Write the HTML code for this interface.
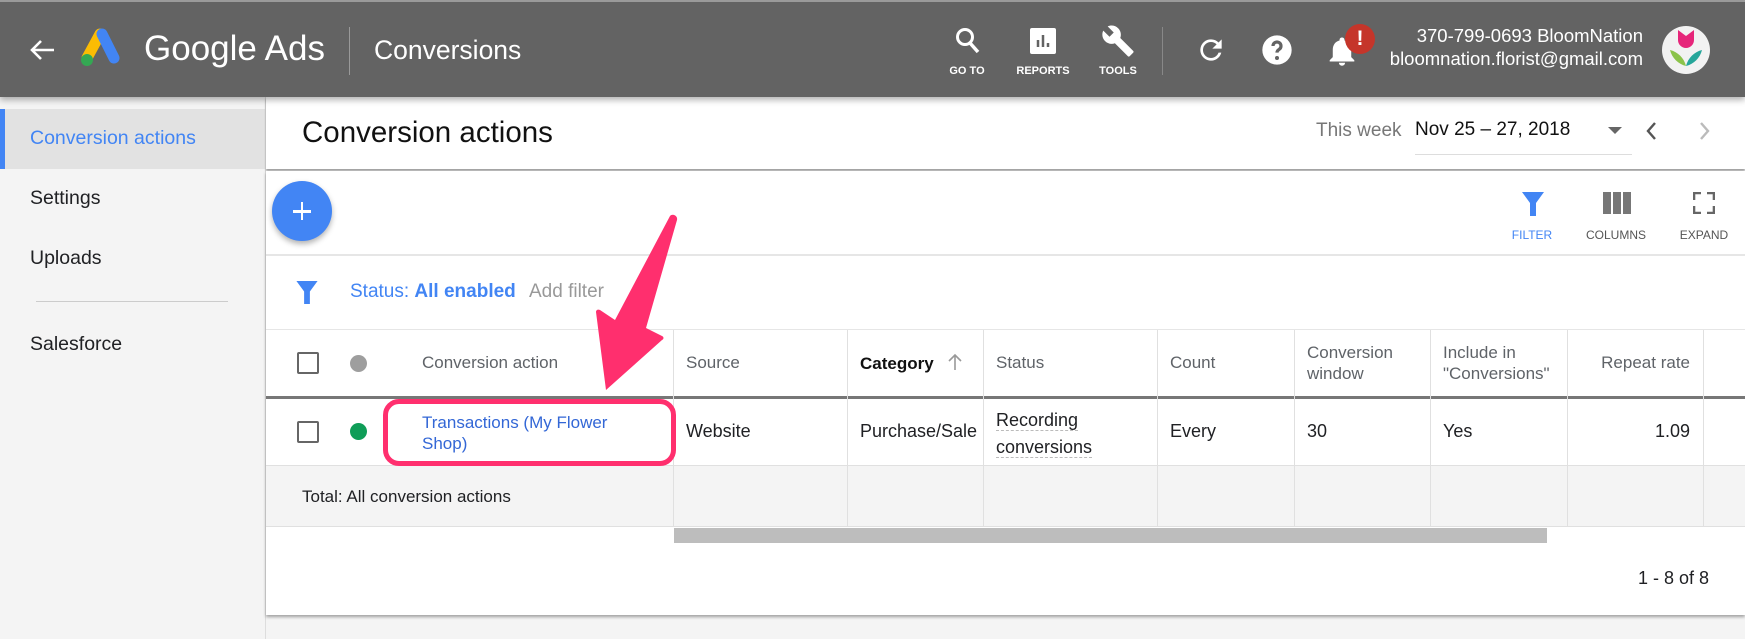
<!DOCTYPE html>
<html><head><meta charset="utf-8"><style>
*{margin:0;padding:0;box-sizing:border-box}
body{width:1745px;height:639px;overflow:hidden;background:#f4f4f4;font-family:"Liberation Sans",sans-serif;position:relative;color:#202124}
.a{position:absolute;white-space:nowrap}
#hdr{position:absolute;left:0;top:0;width:1745px;height:97px;background:#636363;border-top:2px solid #9a9a9a;box-shadow:0 3px 6px rgba(0,0,0,.3);z-index:3}
.w{color:#fff}
.lbl{font-size:11px;color:#fff;font-weight:bold;transform:translateX(-50%)}
.card{position:absolute;background:#fff}
.th{font-size:17px;color:#5f6368}
.td{font-size:18px;color:#202124}
.vl{position:absolute;width:1px;background:#e0e0e0}
</style></head><body>
<div id="hdr">
<svg class="a" style="left:28px;top:36px" width="28" height="24" viewBox="0 0 28 24"><path d="M26 12H4M13 3L4 12l9 9" stroke="#fff" stroke-width="2.6" fill="none"/></svg>
<svg class="a" style="left:78px;top:26px" width="46" height="42" viewBox="0 0 46 42"><path d="M22 6L9 30" stroke="#fbbc04" stroke-width="11" stroke-linecap="round"/><path d="M24 6l12 24" stroke="#4285f4" stroke-width="11" stroke-linecap="round"/><circle cx="9" cy="32" r="6" fill="#34a853"/></svg>
<div class="a w" style="left:144px;top:27px;font-size:35px">Google Ads</div>
<div class="a" style="left:349px;top:25px;width:1px;height:48px;background:#999"></div>
<div class="a w" style="left:374px;top:33px;font-size:26.5px">Conversions</div>
<svg class="a" style="left:955px;top:25px" width="26" height="28" viewBox="0 0 26 28"><circle cx="10" cy="10" r="7.5" stroke="#fff" stroke-width="3" fill="none"/><path d="M15 16l8 9" stroke="#fff" stroke-width="3.5"/></svg>
<div class="a lbl" style="left:967px;top:63px">GO TO</div>
<svg class="a" style="left:1029px;top:25px" width="28" height="28" viewBox="0 0 28 28"><rect x="1" y="1" width="26" height="26" rx="2" fill="#fff"/><path d="M9 20v-7M14 20V8M19 20v-4" stroke="#636363" stroke-width="2.5"/></svg>
<div class="a lbl" style="left:1043px;top:63px">REPORTS</div>
<svg class="a" style="left:1101px;top:22px" width="34" height="34" viewBox="0 0 24 24"><path fill="#fff" d="M22.7 19l-9.1-9.1c.9-2.3.4-5-1.5-6.9-2-2-5-2.4-7.4-1.3L9 6 6 9 1.6 4.7C.4 7.1.9 10.1 2.9 12.1c1.9 1.9 4.6 2.4 6.9 1.5l9.1 9.1c.4.4 1 .4 1.4 0l2.3-2.3c.5-.4.5-1.1.1-1.4z"/></svg>
<div class="a lbl" style="left:1118px;top:63px">TOOLS</div>
<div class="a" style="left:1162px;top:25px;width:1px;height:48px;background:#888"></div>
<svg class="a" style="left:1195px;top:32px" width="32" height="32" viewBox="0 0 24 24"><path fill="#fff" d="M17.65 6.35A7.96 7.96 0 0 0 12 4a8 8 0 1 0 7.73 10h-2.08A6 6 0 1 1 12 6c1.66 0 3.14.69 4.22 1.78L13 11h7V4l-2.35 2.35z"/></svg>
<svg class="a" style="left:1261px;top:32px" width="32" height="32" viewBox="0 0 24 24"><circle cx="12" cy="12" r="11" fill="#fff"/><path d="M9 9a3 3 0 1 1 4.5 2.6c-1 .6-1.5 1.1-1.5 2.4" stroke="#636363" stroke-width="2.4" fill="none"/><circle cx="12" cy="18" r="1.5" fill="#636363"/></svg>
<svg class="a" style="left:1327px;top:33px" width="30" height="32" viewBox="0 0 24 26"><path fill="#fff" d="M12 25a2.5 2.5 0 0 0 2.5-2.5h-5A2.5 2.5 0 0 0 12 25zm7.5-7V12c0-3.7-2-6.7-5.5-7.5V4a2 2 0 0 0-4 0v.5C6.5 5.3 4.5 8.3 4.5 12v6l-2.5 2.5v1h20v-1L19.5 18z"/></svg>
<div class="a" style="left:1345px;top:22px;width:30px;height:30px;border-radius:50%;background:#c5352a;color:#fff;font-weight:bold;font-size:21px;text-align:center;line-height:30px">!</div>
<div class="a w" style="right:102px;top:23px;font-size:18.5px;text-align:right">370-799-0693 BloomNation</div>
<div class="a w" style="right:102px;top:46px;font-size:18.5px;text-align:right">bloomnation.florist@gmail.com</div>
<div class="a" style="left:1662px;top:24px;width:48px;height:48px;border-radius:50%;background:#f2f2f2;overflow:hidden">
<svg width="48" height="48" viewBox="0 0 48 48"><path d="M16 4l8 6 8-6v10a8 8 0 0 1-16 0z" fill="#e6267a"/><path d="M24 40c-2-8-8-14-16-16 2 8 8 14 16 16z" fill="#8bc34a"/><path d="M24 40c2-8 8-14 16-16-2 8-8 14-16 16z" fill="#26a69a"/></svg></div>
</div>

<div class="a" style="left:0;top:109px;width:265px;height:60px;background:#e2e2e2;border-left:5px solid #4285f4"></div>
<div class="a" style="left:30px;top:127px;font-size:19.5px;color:#4285f4">Conversion actions</div>
<div class="a" style="left:30px;top:187px;font-size:19.5px">Settings</div>
<div class="a" style="left:30px;top:247px;font-size:19.5px">Uploads</div>
<div class="a" style="left:36px;top:301px;width:192px;height:1px;background:#ccc"></div>
<div class="a" style="left:30px;top:333px;font-size:19.5px">Salesforce</div>
<div class="a" style="left:265px;top:97px;width:1px;height:542px;background:#ddd"></div>

<div class="card" style="left:266px;top:97px;width:1479px;height:72px;box-shadow:0 2px 2px rgba(0,0,0,.35)"></div>
<div class="a" style="left:302px;top:116px;font-size:29.5px;color:#111">Conversion actions</div>
<div class="a" style="left:1316px;top:120px;font-size:19px;color:#777">This week</div>
<div class="a" style="left:1415px;top:119px;font-size:19px;color:#111">Nov 25 – 27, 2018</div>
<div class="a" style="left:1608px;top:127px;width:0;height:0;border-left:7px solid transparent;border-right:7px solid transparent;border-top:7px solid #666"></div>
<div class="a" style="left:1415px;top:154px;width:217px;height:1px;background:#ddd"></div>
<svg class="a" style="left:1644px;top:121px" width="14" height="20"><path d="M11 2L4 10l7 8" stroke="#555" stroke-width="2.4" fill="none"/></svg>
<svg class="a" style="left:1698px;top:121px" width="14" height="20"><path d="M3 2l7 8-7 8" stroke="#bbb" stroke-width="2.4" fill="none"/></svg>

<div class="card" style="left:266px;top:171px;width:1479px;height:444px;box-shadow:0 2px 3px rgba(0,0,0,.35)"></div>
<div class="a" style="left:272px;top:181px;width:60px;height:60px;border-radius:50%;background:#4285f4;box-shadow:0 3px 6px rgba(0,0,0,.3)"></div>
<div class="a" style="left:293px;top:210px;width:18px;height:2.5px;background:#fff"></div>
<div class="a" style="left:300.8px;top:202px;width:2.5px;height:18px;background:#fff"></div>
<svg class="a" style="left:1521px;top:191px" width="24" height="26" viewBox="0 0 24 26"><path d="M1 1h22l-8 11v13h-6V12z" fill="#4285f4"/></svg>
<div class="a lbl" style="left:1532px;top:228px;color:#4285f4;font-weight:normal;font-size:12px">FILTER</div>
<svg class="a" style="left:1603px;top:192px" width="28" height="24"><rect x="0" y="0" width="8" height="22" fill="#777"/><rect x="10" y="0" width="8" height="22" fill="#777"/><rect x="20" y="0" width="8" height="22" fill="#777"/></svg>
<div class="a lbl" style="left:1616px;top:228px;color:#555;font-weight:normal;font-size:12px">COLUMNS</div>
<svg class="a" style="left:1693px;top:192px" width="22" height="22"><path d="M1 8V1h7M14 1h7v7M21 14v7h-7M8 21H1v-7" stroke="#666" stroke-width="2.6" fill="none"/></svg>
<div class="a lbl" style="left:1704px;top:228px;color:#555;font-weight:normal;font-size:12px">EXPAND</div>
<div class="a" style="left:266px;top:254px;width:1479px;height:2px;background:#e6e6e6"></div>
<svg class="a" style="left:295px;top:280px" width="24" height="25" viewBox="0 0 24 26"><path d="M1 1h22l-8 11v13h-6V12z" fill="#4285f4"/></svg>
<div class="a" style="left:350px;top:281px;font-size:19px;color:#4285f4">Status: <b>All enabled</b></div>
<div class="a" style="left:529px;top:281px;font-size:19px;color:#999">Add filter</div>

<div class="a" style="left:266px;top:329px;width:1479px;height:1px;background:#e6e6e6"></div>
<div class="a" style="left:266px;top:396px;width:1479px;height:3px;background:#777"></div>
<div class="a" style="left:266px;top:465px;width:1479px;height:62px;background:#f4f4f4;border-top:1px solid #e0e0e0;border-bottom:1px solid #e0e0e0"></div>
<div class="vl" style="left:673px;top:330px;height:197px"></div>
<div class="vl" style="left:847px;top:330px;height:197px"></div>
<div class="vl" style="left:983px;top:330px;height:197px"></div>
<div class="vl" style="left:1157px;top:330px;height:197px"></div>
<div class="vl" style="left:1294px;top:330px;height:197px"></div>
<div class="vl" style="left:1430px;top:330px;height:197px"></div>
<div class="vl" style="left:1567px;top:330px;height:197px"></div>
<div class="vl" style="left:1703px;top:330px;height:197px"></div>
<div class="a" style="left:297px;top:352px;width:22px;height:22px;border:2.5px solid #666;border-radius:2px"></div>
<div class="a" style="left:350px;top:355px;width:17px;height:17px;border-radius:50%;background:#9e9e9e"></div>
<div class="a th" style="left:422px;top:353px">Conversion action</div>
<div class="a th" style="left:686px;top:353px">Source</div>
<div class="a th" style="left:860px;top:354px;color:#111;font-weight:bold">Category</div>
<svg class="a" style="left:947px;top:353px" width="16" height="18"><path d="M8 17V2M2 8l6-6 6 6" stroke="#999" stroke-width="1.6" fill="none"/></svg>
<div class="a th" style="left:996px;top:353px">Status</div>
<div class="a th" style="left:1170px;top:353px">Count</div>
<div class="a th" style="left:1307px;top:342px;line-height:21px">Conversion<br>window</div>
<div class="a th" style="left:1443px;top:342px;line-height:21px">Include in<br>"Conversions"</div>
<div class="a th" style="right:55px;top:353px">Repeat rate</div>

<div class="a" style="left:297px;top:421px;width:22px;height:22px;border:2.5px solid #666;border-radius:2px"></div>
<div class="a" style="left:350px;top:423px;width:17px;height:17px;border-radius:50%;background:#0f9d58"></div>
<div class="a" style="left:422px;top:412px;font-size:17px;color:#3367d6;line-height:21px">Transactions (My Flower<br>Shop)</div>
<div class="a td" style="left:686px;top:421px">Website</div>
<div class="a td" style="left:860px;top:421px">Purchase/Sale</div>
<div class="a td" style="left:996px;top:407px;line-height:27px"><span style="border-bottom:1.5px dashed #bbb">Recording</span><br><span style="border-bottom:1.5px dashed #bbb">conversions</span></div>
<div class="a td" style="left:1170px;top:421px">Every</div>
<div class="a td" style="left:1307px;top:421px">30</div>
<div class="a td" style="left:1443px;top:421px">Yes</div>
<div class="a td" style="right:55px;top:421px">1.09</div>
<div class="a td" style="left:302px;top:487px;font-size:17px">Total: All conversion actions</div>
<div class="a" style="left:674px;top:528px;width:873px;height:15px;background:#bdbdbd"></div>
<div class="a td" style="right:36px;top:568px">1 - 8 of 8</div>

<div class="a" style="left:383px;top:399px;width:293px;height:67px;border:5px solid #ff2f6e;border-radius:16px"></div>
<svg class="a" style="left:590px;top:210px" width="100" height="190" viewBox="0 0 100 190"><path d="M80 6c3-3 8 0 7 4L56 118l16 8c2 1 2 3 0 4L16 180 6 102c0-2 2-3 4-2l15 10z" fill="#ff2f6e"/></svg>
</body></html>
